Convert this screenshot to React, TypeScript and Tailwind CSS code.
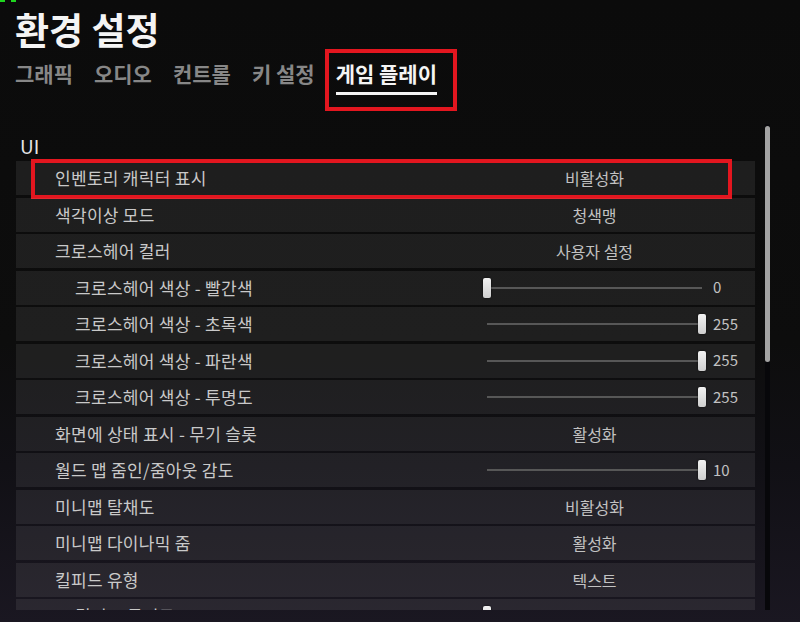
import React from "react";

type Row =
  | { label: string; sub?: boolean; kind: "value"; value: string }
  | { label: string; sub?: boolean; kind: "slider"; value: number; max: number };

const rows: Row[] = [
  { label: "인벤토리 캐릭터 표시", kind: "value", value: "비활성화" },
  { label: "색각이상 모드", kind: "value", value: "청색맹" },
  { label: "크로스헤어 컬러", kind: "value", value: "사용자 설정" },
  { label: "크로스헤어 색상 - 빨간색", sub: true, kind: "slider", value: 0, max: 255 },
  { label: "크로스헤어 색상 - 초록색", sub: true, kind: "slider", value: 255, max: 255 },
  { label: "크로스헤어 색상 - 파란색", sub: true, kind: "slider", value: 255, max: 255 },
  { label: "크로스헤어 색상 - 투명도", sub: true, kind: "slider", value: 255, max: 255 },
  { label: "화면에 상태 표시 - 무기 슬롯", kind: "value", value: "활성화" },
  { label: "월드 맵 줌인/줌아웃 감도", kind: "slider", value: 10, max: 10 },
  { label: "미니맵 탈채도", kind: "value", value: "비활성화" },
  { label: "미니맵 다이나믹 줌", kind: "value", value: "활성화" },
  { label: "킬피드 유형", kind: "value", value: "텍스트" },
  { label: "킬피드 투명도", sub: true, kind: "slider", value: 0, max: 255 },
];

const tabs = ["그래픽", "오디오", "컨트롤", "키 설정"];

function Slider({ value, max }: { value: number; max: number }) {
  const pct = (value / max) * 100;
  return (
    <div className="relative h-full w-full">
      <div className="absolute left-[4px] right-[4px] top-1/2 h-[2px] -translate-y-1/2 bg-[#575757]" />
      <div className="absolute left-[4px] right-[4px] top-0 h-full">
        <div
          className="absolute top-1/2 h-[20px] w-[8px] -translate-x-1/2 -translate-y-1/2 rounded-[2px] bg-[linear-gradient(to_bottom,#f2f2f2,#cfcfcf)] shadow-[0_0_2px_rgba(0,0,0,0.8)]"
          style={{ left: `${pct}%` }}
        />
      </div>
    </div>
  );
}

export default function App() {
  return (
    <div
      className="relative h-[622px] w-[800px] overflow-hidden bg-[linear-gradient(to_bottom,#0b0b0b_0%,#0d0d0d_55%,#111015_75%,#1a1721_100%)] text-[#c8c8c8]"
      style={{ fontFamily: '"Noto Sans CJK KR", "Noto Sans", sans-serif' }}
    >
      {/* fps counter remnant */}
      <div className="absolute left-0 top-0 flex gap-[6px]">
        <div className="h-[2px] w-[5px] bg-[#1fd51f]" />
        <div className="h-[2px] w-[5px] bg-[#1fd51f]" />
      </div>

      <header className="pl-[15px] pt-[6px]">
        <h1 className="text-[37px] font-bold leading-[46px] text-[#f4f4f4]">환경 설정</h1>
        <nav className="mt-[7px] flex gap-[21px] text-[21px] font-bold leading-[28px]">
          {tabs.map((t) => (
            <span key={t} className="text-[#878787]">
              {t}
            </span>
          ))}
          <span className="relative text-[#f4f4f4]">
            게임 플레이
            <span className="absolute left-0 right-[0px] top-[33px] h-[2.5px] bg-[#f4f4f4]" />
            <span className="absolute left-[-11px] right-[-20px] top-[-10px] h-[62px] border-[4px] border-[#e3161f]" />
          </span>
        </nav>
      </header>

      <div className="absolute left-0 top-[124px] flex h-[486px]">
        <div className="h-full w-[755px] overflow-hidden pl-[16px]">
          <div className="pb-[4px] pl-[4px] pt-[11px] text-[19px] leading-[22px] text-[#e6e6e6]">UI</div>
          <div className="flex flex-col gap-[2.5px]">
            {rows.map((r, i) => (
              <div
                key={i}
                className="relative flex h-[34px] items-center bg-white/[0.075]"
              >
                <div
                  className={
                    (r.sub ? "pl-[59px]" : "pl-[39px]") +
                    " flex-1 whitespace-nowrap text-[17px] leading-[34px] tracking-[0.3px] text-[#c9c9c9]"
                  }
                >
                  {r.label}
                </div>
                <div className="flex h-full w-[223px] items-center justify-center text-[16px] text-[#c2c2c2]">
                  {r.kind === "value" ? r.value : <Slider value={r.value} max={r.max} />}
                </div>
                <div className="w-[49px] pl-[7px] text-[15px] text-[#c2c2c2]">
                  {r.kind === "slider" ? r.value : ""}
                </div>
                {i === 0 && (
                  <div className="absolute bottom-[-4px] left-[15px] right-[23px] top-[-2px] border-[4px] border-[#e3161f]" />
                )}
              </div>
            ))}
          </div>
        </div>
        <div className="ml-[10px] h-full w-[5px] bg-[#07070a] pt-[2px]">
          <div className="h-[236px] w-[5px] rounded-full bg-[#a3a3a3]" />
        </div>
      </div>
    </div>
  );
}
